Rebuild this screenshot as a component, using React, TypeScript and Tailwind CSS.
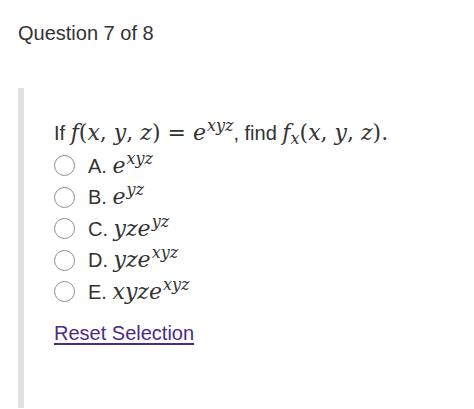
import React, { useState } from 'react';

const options = [
    { key: 'A', body: <><M>e</M><Sup>xyz</Sup></> },
    { key: 'B', body: <><M>e</M><Sup>yz</Sup></> },
    { key: 'C', body: <><M>yze</M><Sup>yz</Sup></> },
    { key: 'D', body: <><M>yze</M><Sup>xyz</Sup></> },
    { key: 'E', body: <><M>xyze</M><Sup>xyz</Sup></> },
];

// math italic piece
function M({ children }: { children: React.ReactNode }) {
    return <span className="font-['DejaVu_Serif',serif] italic text-[22px] leading-none">{children}</span>;
}

function R({ children }: { children: React.ReactNode }) {
    return <span className="font-['DejaVu_Serif',serif] text-[22px] leading-none">{children}</span>;
}

function Sup({ children }: { children: React.ReactNode }) {
    return (
        <span className="font-['DejaVu_Serif',serif] italic text-[16px] leading-none relative -top-[9px] ml-[1px]">
            {children}
        </span>
    );
}

export default function App() {
    const [selected, setSelected] = useState<string | null>(null);

    return (
        <div className="min-h-[409px] bg-white text-[#333] font-['Liberation_Sans',Arial,sans-serif] text-[20px]">
            <div className="pl-[18px] pt-[18px] leading-[30px]">Question 7 of 8</div>
            <div className="ml-[18px] mt-[40px] border-l-[6px] border-[#e1e1e1] pl-[30px] pt-[30px] pb-[60px]">
                <p className="leading-[30px] whitespace-nowrap">
                    If <M>f</M><R>(</R><M>x</M><R>, </R><M>y</M><R>, </R><M>z</M><R>) = </R><M>e</M>
                    <Sup>xyz</Sup>, find <M>f</M><span className="font-['DejaVu_Serif',serif] italic text-[16px] relative top-[4px]">x</span>
                    <R>(</R><M>x</M><R>, </R><M>y</M><R>, </R><M>z</M><R>).</R>
                </p>
                <div className="flex flex-col">
                    {options.map((o) => (
                        <label key={o.key} className="flex items-center h-[31.5px] cursor-pointer">
                            <span
                                onClick={() => setSelected(o.key)}
                                className="w-[21px] h-[21px] rounded-full border border-[#8d8d8d] bg-white flex items-center justify-center shrink-0"
                            >
                                {selected === o.key && <span className="w-[11px] h-[11px] rounded-full bg-[#4a2c87]" />}
                            </span>
                            <span className="ml-[13px] whitespace-nowrap">
                                {o.key}. {o.body}
                            </span>
                        </label>
                    ))}
                </div>
                <button
                    onClick={() => setSelected(null)}
                    className="mt-[10px] text-[#4b2c86] underline underline-offset-[3px] leading-[30px]"
                >
                    Reset Selection
                </button>
            </div>
        </div>
    );
}
